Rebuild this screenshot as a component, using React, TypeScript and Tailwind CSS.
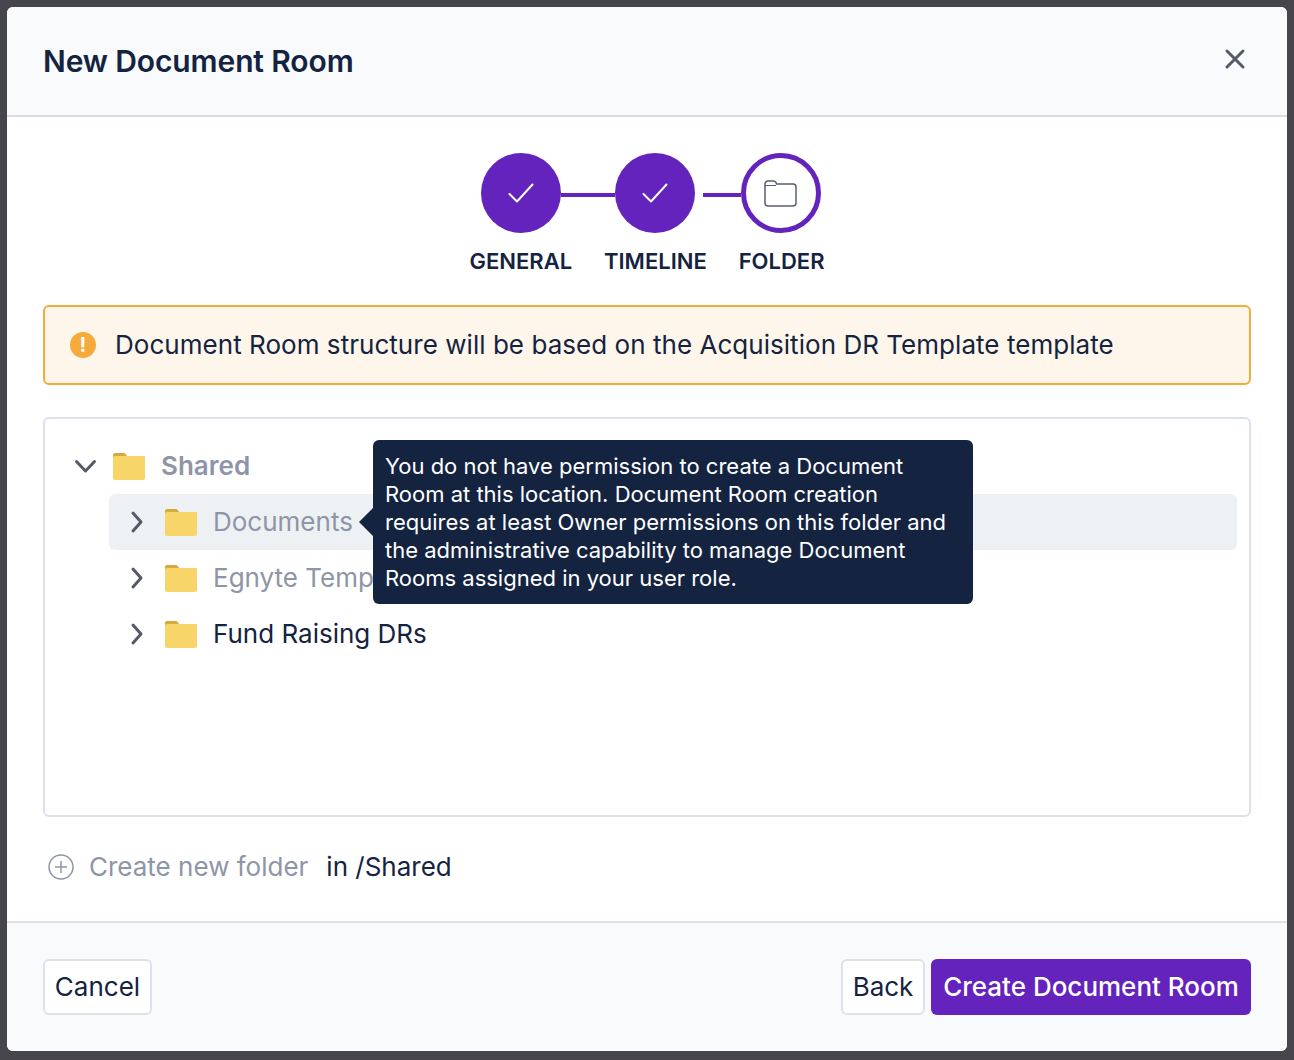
function Check() {
  return (
    <svg width="26" height="22" viewBox="0 0 26 22" fill="none" stroke="white" strokeWidth="2" strokeLinecap="round" strokeLinejoin="round">
      <path d="M1.5 12 L9 19.5 L24.5 2.5" />
    </svg>
  );
}

function Folder() {
  return (
    <svg width="32" height="28" viewBox="0 0 32 28" className="shrink-0">
      <path d="M0 3a2 2 0 0 1 2-2h8.5a3 3 0 0 1 2.4 1.2L14 4h16a2 2 0 0 1 2 2v4H0z" fill="#d6a93c" />
      <path d="M0 6a2 2 0 0 1 2-2h28a2 2 0 0 1 2 2v20a2 2 0 0 1-2 2H2a2 2 0 0 1-2-2z" fill="#f8d568" />
    </svg>
  );
}

function Chevron({ open }: { open?: boolean }) {
  return (
    <svg width="28" height="28" viewBox="0 0 28 28" fill="none" stroke="#565a68" strokeWidth="3" strokeLinecap="round" strokeLinejoin="round" className="shrink-0">
      <path d={open ? "M5.5 9.5 L14.5 19 L23.5 9.5" : "M10 5 L18 14 L10 23"} />
    </svg>
  );
}

function TreeRow({ label, muted, active }: { label: string; muted?: boolean; active?: boolean }) {
  return (
    <div className={`ml-[64px] mr-[12px] h-[56px] flex items-center rounded-md ${active ? "bg-[#eef1f4]" : ""}`}>
      <div className="ml-[14px]">
        <Chevron />
      </div>
      <div className="ml-[14px]">
        <Folder />
      </div>
      <span className={`ml-[16px] pb-[2px] text-[26px] whitespace-nowrap ${muted ? "text-[#8d95a6]" : "text-[#14233f]"}`}>{label}</span>
    </div>
  );
}

export default function App() {
  return (
    <div className="w-[1294px] h-[1060px] bg-[#46454b] p-[7px] pb-[9px] font-['Inter',sans-serif] text-[#14233f]">
      <div className="w-[1280px] h-[1044px] rounded-md overflow-hidden bg-white flex flex-col">
        {/* Header */}
        <div className="h-[110px] shrink-0 bg-[#f9fafc] border-b-2 border-[#d8dee8] pl-[36px] pr-[38px] flex items-center justify-between">
          <h1 className="text-[30px] font-semibold tracking-[-0.12px]">New Document Room</h1>
          <svg width="28" height="28" viewBox="0 0 28 28" fill="none" stroke="#565a68" strokeWidth="3" strokeLinecap="round" className="-mt-[5px]">
            <path d="M6 6 L22 22 M22 6 L6 22" />
          </svg>
        </div>

        {/* Body */}
        <div className="flex-1 px-[36px] pt-[36px]">
          <div className="w-[355px] mx-auto">
            <div className="flex items-center pl-[11px]">
              <div className="w-[80px] h-[80px] rounded-full bg-[#6423bd] flex items-center justify-center">
                <Check />
              </div>
              <div className="w-[54px] h-[4px] bg-[#6423bd] mt-[3px]" />
              <div className="w-[80px] h-[80px] rounded-full bg-[#6423bd] flex items-center justify-center">
                <Check />
              </div>
              <div className="w-[38px] h-[4px] ml-[8px] bg-[#6423bd] mt-[3px]" />
              <div className="w-[80px] h-[80px] rounded-full border-[5px] border-[#6423bd] flex items-center justify-center">
                <svg width="33" height="27" viewBox="0 0 33 27" fill="none" stroke="#5a5f6c" strokeWidth="1.5">
                  <path d="M1 4a3 3 0 0 1 3-3h5a3 3 0 0 1 3 1.5L12.5 4H29a3 3 0 0 1 3 3v16a3 3 0 0 1-3 3H4a3 3 0 0 1-3-3z" />
                  <path d="M1 5.5h11" strokeWidth="1" />
                </svg>
              </div>
            </div>
            <div className="flex justify-between mt-[13px] text-[22px] font-semibold leading-[30px] whitespace-nowrap">
              <span>GENERAL</span>
              <span>TIMELINE</span>
              <span>FOLDER</span>
            </div>
          </div>

          {/* Alert */}
          <div className="mt-[29px] h-[80px] rounded-md border-2 border-[#f5ab3c] bg-[#fef6ea] flex items-center pl-[25px]">
            <div className="w-[26px] h-[26px] rounded-full bg-[#f5ab3c] flex items-center justify-center text-white text-[20px] font-bold leading-none">!</div>
            <span className="ml-[19px] pb-[2px] text-[26px] tracking-[0.04px]">Document Room structure will be based on the Acquisition DR Template template</span>
          </div>

          {/* Folder tree */}
          <div className="relative mt-[32px] h-[400px] rounded-md border-2 border-[#dde1ea] pt-[19px]">
            <div className="h-[56px] flex items-center">
              <div className="ml-[26px]">
                <Chevron open />
              </div>
              <div className="ml-[14px]">
                <Folder />
              </div>
              <span className="ml-[16px] pb-[2px] text-[26px] font-semibold text-[#8d95a6]">Shared</span>
            </div>
            <TreeRow label="Documents" muted active />
            <TreeRow label="Egnyte Templates" muted />
            <TreeRow label="Fund Raising DRs" />

            <div className="absolute left-[328px] top-[21px] w-[600px] h-[164px] rounded-md bg-[#14233f] text-white text-[22px] leading-[28px] px-[12px] py-[12px]">
              <div className="absolute -left-[14px] top-[68px] w-0 h-0 border-y-[14px] border-y-transparent border-r-[14px] border-r-[#14233f]" />
              You do not have permission to create a Document Room at this location. Document Room creation requires at least Owner permissions on this folder and the administrative capability to manage Document Rooms assigned in your user role.
            </div>
          </div>

          {/* Create folder */}
          <div className="mt-[32px] h-[36px] flex items-center text-[26px]">
            <svg width="26" height="26" viewBox="0 0 26 26" fill="none" stroke="#8d95a6" strokeWidth="1.5" className="ml-[5px]">
              <circle cx="13" cy="13" r="12" />
              <path d="M13 7v12M7 13h12" />
            </svg>
            <span className="ml-[15px] pb-[2px] text-[#8d95a6]">Create new folder</span>
            <span className="ml-[18px] pb-[2px]">in /Shared</span>
          </div>
        </div>

        {/* Footer */}
        <div className="h-[130px] shrink-0 bg-[#f9fafc] border-t-2 border-[#dde1ea] px-[36px] flex items-center justify-between">
          <button className="h-[56px] w-[109px] pb-[2px] rounded-md border-2 border-[#dde1ea] bg-white text-[26px]">Cancel</button>
          <div className="flex gap-[6px]">
            <button className="h-[56px] w-[84px] pb-[2px] rounded-md border-2 border-[#dde1ea] bg-white text-[26px]">Back</button>
            <button className="h-[56px] w-[320px] pb-[2px] rounded-md bg-[#6423bd] text-white text-[26px] font-medium whitespace-nowrap">Create Document Room</button>
          </div>
        </div>
      </div>
    </div>
  );
}
